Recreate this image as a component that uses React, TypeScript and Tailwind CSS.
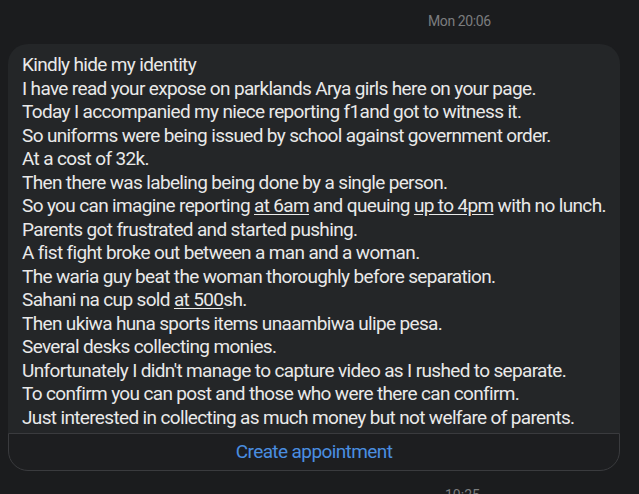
const lines: string[] = [
  'Kindly hide my identity',
  'I have read your expose on parklands Arya girls here on your page.',
  'Today I accompanied my niece reporting f1and got to witness it.',
  'So uniforms were being issued by school against government order.',
  'At a cost of 32k.',
  'Then there was labeling being done by a single person.',
  '',
  'Parents got frustrated and started pushing.',
  'A fist fight broke out between a man and a woman.',
  'The waria guy beat the woman thoroughly before separation.',
  '',
  'Then ukiwa huna sports items unaambiwa ulipe pesa.',
  'Several desks collecting monies.',
  "Unfortunately I didn't manage to capture video as I rushed to separate.",
  'To confirm you can post and those who were there can confirm.',
  'Just interested in collecting as much money but not welfare of parents.',
];

function Line({ children }: { children: React.ReactNode }) {
  return <div className="h-[23.5px] leading-[23.5px] whitespace-nowrap">{children}</div>;
}

export default function App() {
  return (
    <div
      className="h-[494px] w-[639px] overflow-hidden bg-[#1b1c1e] text-[#e9e9e9]"
      style={{ fontFamily: 'Roboto, "Noto Sans", sans-serif' }}
    >
      {/* timestamp */}
      <div className="pt-[12px] pl-[428px] text-[14px] leading-[18px] text-[#7c7d7f] tracking-[-0.4px]">
        Mon 20:06
      </div>

      {/* message bubble */}
      <div className="mt-[14px] ml-[8px] w-[612px]">
        <div className="rounded-t-[20px] bg-[#242628] pl-[14px] pt-[9px] pb-[4px] text-[19px] tracking-[-0.65px]">
          {lines.map((text, i) => {
            if (i === 6)
              return (
                <Line key={i}>
                  So you can imagine reporting <span className="underline underline-offset-2">at 6am</span> and queuing{' '}
                  <span className="underline underline-offset-2">up to 4pm</span> with no lunch.
                </Line>
              );
            if (i === 10)
              return (
                <Line key={i}>
                  Sahani na cup sold <span className="underline underline-offset-2">at 500</span>sh.
                </Line>
              );
            return <Line key={i}>{text}</Line>;
          })}
        </div>
        <div className="h-[38px] rounded-b-[20px] border border-[#3a3b3e] bg-[#1d1e20] flex items-center justify-center text-[19px] tracking-[-0.6px] text-[#4a8ee0]">
          Create appointment
        </div>
      </div>

      {/* next timestamp, cut off */}
      <div className="pt-[15px] pl-[445px] text-[14px] leading-[18px] text-[#7c7d7f]">10:25</div>
    </div>
  );
}
